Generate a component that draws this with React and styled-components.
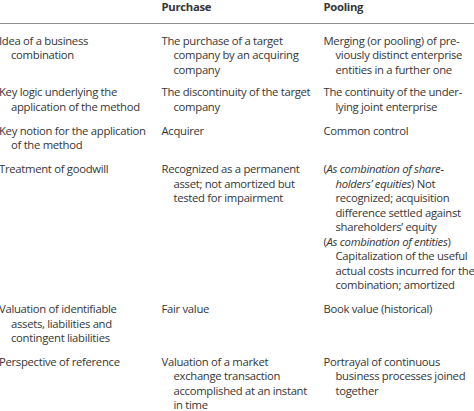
import React from "react";
import styled, { createGlobalStyle } from "styled-components";

const Global = createGlobalStyle`
  html, body { margin: 0; padding: 0; background: #ffffff; }
  body { width: 474px; height: 411px; overflow: hidden; }
`;

const Table = styled.div`
  display: grid;
  grid-template-columns: 162.5px 162px 1fr;
  margin-left: -1px;
  margin-top: -0.5px;
  font-family: "Open Sans", "Noto Sans", sans-serif;
  font-size: 11.3px;
  line-height: 14.5px;
  letter-spacing: -0.3px;
  color: #363636;
`;

const HeadCell = styled.div`
  font-weight: 700;
  padding-bottom: 8.5px;
  border-bottom: 1px solid #8e8e8e;
  margin-bottom: ${(p) => p.$after}px;
`;

const Cell = styled.div`
  padding-left: 12px;
  padding-bottom: ${(p) => p.$gap}px;
  white-space: nowrap;
`;

const Para = styled.div`
  text-indent: -12px;
`;

const Lines = ({ lines }) => (
  <Para>
    {lines.map((l, i) => (
      <React.Fragment key={i}>
        {i > 0 && <br />}
        {l}
      </React.Fragment>
    ))}
  </Para>
);

const rows = [
  {
    gap: 8,
    cells: [
      [["Idea of a business", "combination"]],
      [["The purchase of a target", "company by an acquiring", "company"]],
      [["Merging (or pooling) of pre-", "viously distinct enterprise", "entities in a further one"]],
    ],
  },
  {
    gap: 9.5,
    cells: [
      [["Key logic underlying the", "application of the method"]],
      [["The discontinuity of the target", "company"]],
      [["The continuity of the under-", "lying joint enterprise"]],
    ],
  },
  {
    gap: 9.5,
    cells: [
      [["Key notion for the application", "of the method"]],
      [["Acquirer"]],
      [["Common control"]],
    ],
  },
  {
    gap: 9.5,
    cells: [
      [["Treatment of goodwill"]],
      [["Recognized as a permanent", "asset; not amortized but", "tested for impairment"]],
      [
        [
          <>(<i>As combination of share-</i></>,
          <><i>holders’ equities</i>) Not</>,
          "recognized; acquisition",
          "difference settled against",
          "shareholders’ equity",
        ],
        [
          <>(<i>As combination of entities</i>)</>,
          "Capitalization of the useful",
          "actual costs incurred for the",
          "combination; amortized",
        ],
      ],
    ],
  },
  {
    gap: 9,
    cells: [
      [["Valuation of identifiable", "assets, liabilities and", "contingent liabilities"]],
      [["Fair value"]],
      [["Book value (historical)"]],
    ],
  },
  {
    gap: 0,
    cells: [
      [["Perspective of reference"]],
      [["Valuation of a market", "exchange transaction", "accomplished at an instant", "in time"]],
      [["Portrayal of continuous", "business processes joined", "together"]],
    ],
  },
];

export default function App() {
  return (
    <>
      <Global />
      <Table>
        <HeadCell $after={10}>&nbsp;</HeadCell>
        <HeadCell $after={10}>Purchase</HeadCell>
        <HeadCell $after={10}>Pooling</HeadCell>
        {rows.map((r, ri) =>
          r.cells.map((paras, ci) => (
            <Cell key={`${ri}-${ci}`} $gap={r.gap}>
              {paras.map((lines, pi) => (
                <Lines key={pi} lines={lines} />
              ))}
            </Cell>
          ))
        )}
      </Table>
    </>
  );
}
